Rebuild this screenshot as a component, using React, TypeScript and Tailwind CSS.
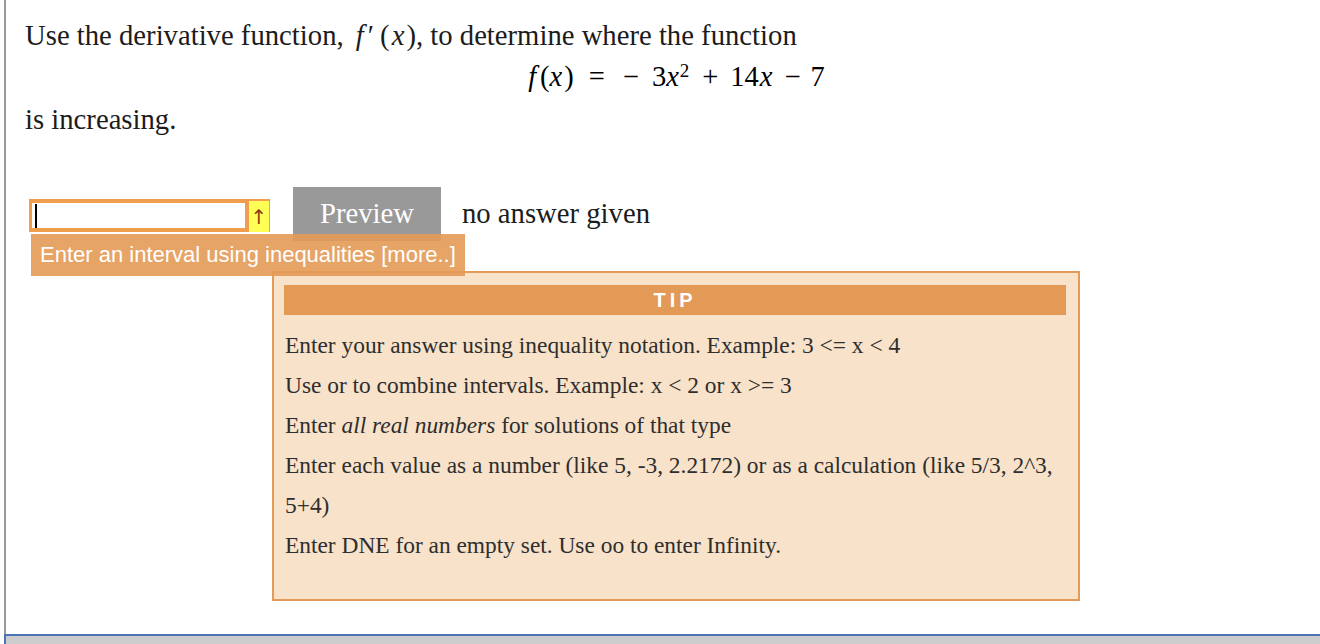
import React from "react";

const serif = { fontFamily: '"Liberation Serif", "Times New Roman", serif' };
const sans = { fontFamily: '"Liberation Sans", Arial, sans-serif' };

const Equation: React.FC = () => (
  <div className="flex justify-center items-baseline h-[42px] leading-[42px] text-black text-[28.5px] pl-[8px]">
    <span className="italic">f</span>
    <span className="ml-[4px]">(</span>
    <span className="italic">x</span>
    <span className="ml-[2px]">)</span>
    <span className="ml-[15px]">=</span>
    <span className="ml-[18px]">−</span>
    <span className="ml-[13px]">3</span>
    <span className="italic">x</span>
    <sup className="text-[19px] ml-[1px]">2</sup>
    <span className="ml-[13px]">+</span>
    <span className="ml-[12px]">14</span>
    <span className="italic ml-[1px]">x</span>
    <span className="ml-[12px]">−</span>
    <span className="ml-[10px]">7</span>
  </div>
);

const tips = [
  <>Enter your answer using inequality notation. Example: 3 &lt;= x &lt; 4</>,
  <>Use or to combine intervals. Example: x &lt; 2 or x &gt;= 3</>,
  <>
    Enter <i>all real numbers</i> for solutions of that type
  </>,
  <>Enter each value as a number (like 5, -3, 2.2172) or as a calculation (like 5/3, 2^3, 5+4)</>,
  <>Enter DNE for an empty set. Use oo to enter Infinity.</>,
];

const App: React.FC = () => {
  return (
    <div className="w-[1320px] h-[644px] bg-white overflow-hidden flex flex-col" style={serif}>
      <div className="ml-[4px] h-[634px] shrink-0 border-l-2 border-[#999999] pl-[19px] pt-[14px] text-[#1c1c1c] text-[28.7px]">
        {/* Question */}
        <p className="leading-[42px]">
          Use the derivative function, <span className="italic ml-[5px]">f</span>
          <span className="ml-[4px] mr-[6px]">′</span>(<span className="italic ml-[2px]">x</span>
          <span className="ml-[2px]">)</span>, to determine where the function
        </p>
        <Equation />
        <p className="leading-[42px]">is increasing.</p>

        {/* Answer row */}
        <div className="relative mt-[47px] flex items-center h-[54px]">
          <div className="ml-[4px] flex items-stretch bg-[#f09d4d] pl-[3px] pt-[4px] pr-[1px] h-[33px] mt-[12px] self-start">
            <div className="w-[213px] h-[25px] bg-white flex items-center pl-[3px]">
              <div className="w-[2px] h-[24px] bg-black" />
            </div>
            <div
              className="ml-[4px] -mt-[2px] w-[20px] bg-[#ffff55] flex items-center justify-center text-[#8b3a0f] text-[20px] leading-none"
              style={{ fontFamily: '"DejaVu Sans", sans-serif' }}
            >
              ↑
            </div>
          </div>
          <button className="ml-[23px] w-[148px] h-[54px] bg-[#999999] text-white text-[28.7px] self-start">Preview</button>
          <span className="ml-[21px] -mt-[1px]">no answer given</span>

          {/* Message bar */}
          <div
            className="absolute left-[6px] top-[47px] w-[434px] h-[42px] bg-[#e39a56]/90 text-white text-[22px] leading-[42px] pl-[9px] z-20 whitespace-nowrap"
            style={sans}
          >
            Enter an interval using inequalities [more..]
          </div>

          {/* Tip popover */}
          <div className="absolute left-[247px] top-[84px] w-[808px] h-[330px] border-2 border-[#e49b57] bg-[#f8e2ca] pl-[10px] pr-[12px] pt-[12px] z-10">
            <div
              className="h-[30px] bg-[#e39a56] text-white font-bold text-[20px] tracking-[0.2em] flex items-center justify-center"
              style={sans}
            >
              TIP
            </div>
            <div className="pt-[10px] pl-[1px] text-[23.4px] leading-[40px] text-[#2e2e2e] pr-[10px]">
              {tips.map((t, i) => (
                <p key={i}>{t}</p>
              ))}
            </div>
          </div>
        </div>
      </div>
      <div className="ml-[4px] flex-1 border-t-2 border-l-2 border-[#4b74b8] bg-[#cccccc]" />
    </div>
  );
};

export default App;
